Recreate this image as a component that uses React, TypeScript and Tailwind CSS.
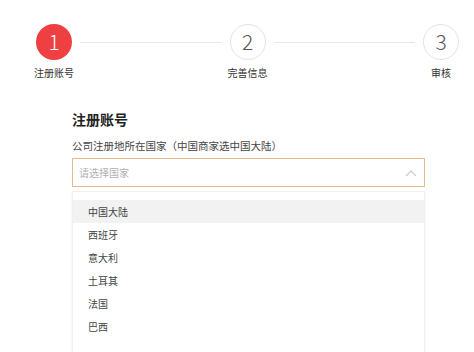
const steps = [
  { n: "1", label: "注册账号", active: true },
  { n: "2", label: "完善信息", active: false },
  { n: "3", label: "审核", active: false },
];

const countries = ["中国大陆", "西班牙", "意大利", "土耳其", "法国", "巴西"];

function Step({ n, label, active }: { n: string; label: string; active: boolean }) {
  return (
    <div className="flex w-[36px] flex-col items-center">
      <div
        className={
          active
            ? "flex h-[36px] w-[36px] items-center justify-center rounded-full bg-[#ee4040] text-[21px] font-light text-white"
            : "flex h-[36px] w-[36px] items-center justify-center rounded-full border border-[#e3e3e3] bg-white text-[21px] font-light text-[#555]"
        }
      >
        {n}
      </div>
      <div className="mt-[6px] whitespace-nowrap text-[10px] leading-[14px] text-[#333]">{label}</div>
    </div>
  );
}

export default function App() {
  return (
    <div
      className="h-[352px] w-[474px] overflow-hidden bg-white"
      style={{ fontFamily: '"Noto Sans CJK SC", "Noto Sans", sans-serif' }}
    >
      {/* Steps */}
      <div className="flex items-start pl-[36px] pr-[15px] pt-[24px]">
        {steps.map((s, i) => (
          <div key={s.n} className={i < steps.length - 1 ? "flex flex-1 items-start" : "flex items-start"}>
            <Step {...s} />
            {i < steps.length - 1 && <div className="mx-[8px] mt-[18px] h-px flex-1 bg-[#e8e8e8]" />}
          </div>
        ))}
      </div>

      {/* Form */}
      <div className="ml-[72px] mt-[29px] w-[353px]">
        <h3 className="text-[14px] font-bold leading-[20px] text-[#222]">注册账号</h3>
        <div className="mt-[9px] text-[10.5px] leading-[16px] text-[#444]">
          公司注册地所在国家（中国商家选中国大陆）
        </div>
        <div className="mt-[4px] flex h-[29px] items-center justify-between border border-[#e6b88c] px-[6px]">
          <span className="text-[10px] text-[#b0b0b0]">请选择国家</span>
          <svg width="12" height="8" viewBox="0 0 12 8" className="mr-[1px]">
            <path d="M1 7 L6 2 L11 7" fill="none" stroke="#c8c8c8" strokeWidth="1.1" />
          </svg>
        </div>
        <div className="mt-[4px] border border-[#f0f0f0] pt-[8px] shadow-[0_1px_4px_rgba(0,0,0,0.05)]">
          {countries.map((c, i) => (
            <div
              key={c}
              className={
                i === 0
                  ? "flex h-[23px] items-center bg-[#f2f2f2] pl-[15px] text-[10px] text-[#444]"
                  : "flex h-[23px] items-center pl-[15px] text-[10px] text-[#444]"
              }
            >
              {c}
            </div>
          ))}
          <div className="h-[20px]" />
        </div>
      </div>
    </div>
  );
}
